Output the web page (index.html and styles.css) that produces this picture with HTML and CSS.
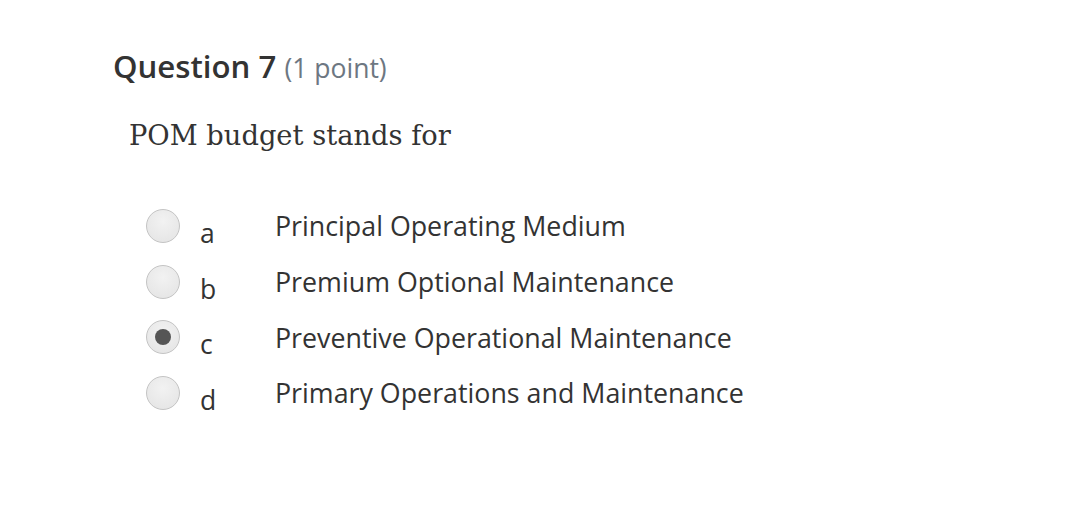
FILE: index.html
```html
<!DOCTYPE html>
<html>
<head>
<meta charset="utf-8">
<link rel="stylesheet" href="styles.css">
</head>
<body>
<div class="question">
  <h2 class="q-title">Question 7 <span class="q-points">(1 point)</span></h2>
  <p class="q-text">POM budget stands for</p>
  <div class="options">
    <div class="option"><span class="radio"></span><span class="letter">a</span><span class="label">Principal Operating Medium</span></div>
    <div class="option"><span class="radio"></span><span class="letter">b</span><span class="label">Premium Optional Maintenance</span></div>
    <div class="option"><span class="radio checked"></span><span class="letter">c</span><span class="label">Preventive Operational Maintenance</span></div>
    <div class="option"><span class="radio"></span><span class="letter">d</span><span class="label">Primary Operations and Maintenance</span></div>
  </div>
</div>
</body>
</html>
```

FILE: styles.css
```css
html, body {
  margin: 0;
  padding: 0;
  background: #ffffff;
}
.question {
  padding: 44px 0 0 113px;
  font-family: "Open Sans", sans-serif;
  color: #333333;
}
.q-title {
  margin: 0;
  font-size: 31.2px;
  font-weight: 600;
  line-height: 44px;
  color: #333333;
}
.q-points {
  font-size: 26.5px;
  font-weight: 400;
  color: #6d7782;
}
.q-text {
  margin: 26px 0 0 16px;
  font-family: "DejaVu Serif", serif;
  font-size: 27.3px;
  line-height: 40px;
  color: #333333;
}
.options {
  margin: 42px 0 0 33px;
  display: flex;
  flex-direction: column;
}
.option {
  display: flex;
  align-items: center;
  height: 55.7px;
}
.radio {
  width: 32px;
  height: 32px;
  border-radius: 50%;
  border: 1px solid #c4c4c4;
  background: radial-gradient(circle at 50% 35%, #f2f2f2 0%, #e3e3e3 100%);
  display: flex;
  align-items: center;
  justify-content: center;
  flex: none;
}
.radio.checked::after {
  content: "";
  width: 16px;
  height: 16px;
  border-radius: 50%;
  background: #555555;
}
.letter {
  width: 95px;
  padding-left: 20px;
  font-size: 26.5px;
  position: relative;
  top: 7px;
  box-sizing: border-box;
  flex: none;
}
.label {
  font-size: 26.8px;
}
```
